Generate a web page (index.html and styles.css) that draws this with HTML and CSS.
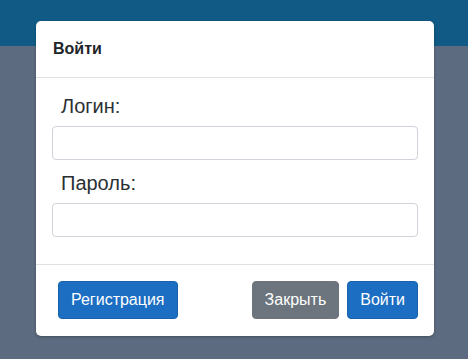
FILE: index.html
```html
<!DOCTYPE html>
<html>
  <head>
    <meta charset="utf-8">
    <title>Вход</title>
    <link rel="stylesheet" href="styles.css">
  </head>
  <body>
    <div class="page">
      <div class="top-row"></div>
      <div class="page-body"></div>
    </div>

    <div class="modal-backdrop">
      <div class="modal-content">
        <div class="modal-header">
          <h5 class="modal-title">Войти</h5>
        </div>

        <div class="modal-body">
          <div class="form-group">
            <label for="login">Логин:</label>
            <input id="login" class="form-control" type="text">
          </div>
          <div class="form-group">
            <label for="password">Пароль:</label>
            <input id="password" class="form-control" type="password">
          </div>
        </div>

        <div class="modal-footer">
          <button class="btn btn-primary btn-register">Регистрация</button>
          <div class="footer-actions">
            <button class="btn btn-secondary">Закрыть</button>
            <button class="btn btn-primary">Войти</button>
          </div>
        </div>
      </div>
    </div>
  </body>
</html>
```

FILE: styles.css
```css
:root {
  --top-row: #105a85;
  --backdrop: #5c6b7f;
  --text: #212529;
  --border: #dee2e6;
  --input-border: #ced4da;
  --primary: #1b6ec2;
  --primary-border: #1861ac;
  --secondary: #6c757d;
}

html, body {
  margin: 0;
  height: 100%;
}

body {
  font-family: "Liberation Sans", Arial, sans-serif;
  color: var(--text);
  background: var(--backdrop);
  overflow: hidden;
}

.page {
  display: flex;
  flex-direction: column;
  height: 100%;
}

.top-row {
  height: 46px;
  background: var(--top-row);
}

.page-body {
  flex: 1;
  background: var(--backdrop);
}

.modal-backdrop {
  position: absolute;
  top: 21px;
  left: 36px;
}

.modal-content {
  width: 398px;
  background: #fff;
  border-radius: 5px;
  box-shadow: 0 1px 3px rgba(0, 0, 0, 0.25);
  display: flex;
  flex-direction: column;
}

.modal-header {
  padding: 16px 17px;
  border-bottom: 1px solid var(--border);
  height: 24px;
}

.modal-title {
  margin: 0;
  font-size: 16px;
  font-weight: 700;
  line-height: 24px;
}

.modal-body {
  display: flex;
  flex-direction: column;
  gap: 11px;
  padding: 16px 16px 27px;
}

.form-group {
  display: flex;
  flex-direction: column;
}

.form-group label {
  font-size: 20px;
  line-height: 24px;
  margin: 0 0 8px 9px;
  color: #2b2f33;
}

.form-control {
  box-sizing: border-box;
  height: 34px;
  width: 100%;
  margin: 0;
  padding: 6px 12px;
  font: inherit;
  font-size: 16px;
  border: 1px solid var(--input-border);
  border-radius: 4px;
  background: #fff;
}

.modal-footer {
  display: flex;
  justify-content: space-between;
  align-items: center;
  padding: 16px 16px 17px 22px;
  border-top: 1px solid var(--border);
}

.footer-actions {
  display: flex;
  gap: 8px;
}

.btn {
  height: 38px;
  padding: 6px 12px;
  font-family: inherit;
  font-size: 16px;
  line-height: 24px;
  color: #fff;
  border: 1px solid transparent;
  border-radius: 4px;
  cursor: pointer;
}

.btn-primary {
  background: var(--primary);
  border-color: var(--primary-border);
}

.btn-secondary {
  background: var(--secondary);
  border-color: var(--secondary);
}
```
